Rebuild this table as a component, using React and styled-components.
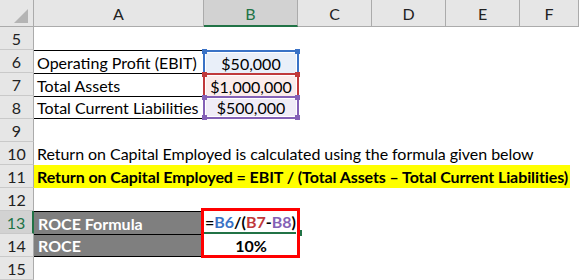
import React from "react";
import styled, { createGlobalStyle, css } from "styled-components";

const GlobalStyle = createGlobalStyle`
  html, body { margin: 0; padding: 0; background: #fff; overflow: hidden; }
  body { font-family: Lato, "Liberation Sans", sans-serif; }
`;

const COLORS = {
  blue: { line: "#3a72c6", fill: "#e9eff9", text: "#3a72c6" },
  red: { line: "#c0393b", fill: "#fbeceb", text: "#c0393b" },
  purple: { line: "#8461b6", fill: "#f0ecf7", text: "#8461b6" },
};

const Sheet = styled.div`
  display: grid;
  grid-template-columns: 34px 170px 94px 74px 74px 74px 59px;
  grid-template-rows: 27px repeat(11, 23px);
  width: 579px;
  height: 280px;
  overflow: hidden;
  font-family: Lato, "Liberation Sans", sans-serif;
  font-size: 16px;
  color: #000;
`;

const Corner = styled.div`
  background: #e6e6e6;
  border-right: 1px solid #ababab;
  border-bottom: 1px solid #ababab;
  display: flex;
  align-items: flex-end;
  justify-content: flex-end;
  padding: 0 4px 3px 0;
  box-sizing: border-box;
`;

const ColHeader = styled.div`
  background: ${(p) => (p.$selected ? "#d2d2d2" : "#e6e6e6")};
  border-right: 1px solid #ababab;
  border-bottom: ${(p) => (p.$selected ? "2px solid #217346" : "1px solid #ababab")};
  color: ${(p) => (p.$selected ? "#217346" : "#222")};
  display: flex;
  align-items: center;
  justify-content: center;
  font-size: 16px;
  box-sizing: border-box;
  padding-top: ${(p) => (p.$selected ? "1px" : "0")};
`;

const RowHeader = styled.div`
  grid-column: 1;
  background: ${(p) => (p.$selected ? "#d2d2d2" : "#e6e6e6")};
  border-right: ${(p) => (p.$selected ? "2px solid #217346" : "1px solid #ababab")};
  border-bottom: 1px solid #c9c9c9;
  color: ${(p) => (p.$selected ? "#217346" : "#222")};
  display: flex;
  align-items: center;
  justify-content: center;
  font-size: 16px;
  box-sizing: border-box;
`;

const Blank = styled.div`
  grid-column: 2 / -1;
`;

const Filler = styled.div`
  grid-column: 4 / -1;
`;

const LabelCell = styled.div`
  border-top: 1px solid #000;
  ${(p) => p.$last && css`border-bottom: 1px solid #000;`}
  display: flex;
  align-items: center;
  padding-left: 3px;
  white-space: nowrap;
  box-sizing: border-box;
`;

const RangeCell = styled.div`
  position: relative;
  border: 2px solid ${(p) => COLORS[p.$tone].line};
  border-bottom: ${(p) => (p.$last ? `2px solid ${COLORS[p.$tone].line}` : "none")};
  margin: 0 0 0 -1px;
  padding: 1px 1px ${(p) => (p.$last ? "1px" : "0")};
  background: ${(p) => COLORS[p.$tone].fill};
  background-clip: content-box;
  display: flex;
  align-items: center;
  justify-content: center;
  white-space: nowrap;
  box-sizing: border-box;
  width: 96px;
`;

const Handle = styled.span`
  position: absolute;
  width: 5px;
  height: 5px;
  background: ${(p) => p.$color};
  ${(p) => (p.$v === "top" ? "top: -3px;" : "bottom: -3px;")}
  ${(p) => (p.$h === "left" ? "left: -3px;" : "right: -3px;")}
`;

const TextCell = styled.div`
  grid-column: 2 / -1;
  display: flex;
  align-items: center;
  padding-left: 3px;
  white-space: nowrap;
  letter-spacing: -0.05px;
`;

const HighlightRow = styled.div`
  grid-column: 2 / -1;
  display: flex;
  align-items: stretch;
`;

const Highlight = styled.div`
  width: 536px;
  background: #ffff00;
  font-weight: 700;
  display: flex;
  align-items: center;
  padding-left: 3px;
  white-space: nowrap;
  box-sizing: border-box;
  letter-spacing: -0.09px;
  overflow: hidden;
`;

const DarkCell = styled.div`
  background: #7f7f7f;
  color: #fff;
  font-weight: 700;
  border-top: 1px solid #000;
  ${(p) => p.$last && css`border-bottom: 1px solid #000;`}
  display: flex;
  align-items: center;
  padding-left: 4px;
  box-sizing: border-box;
`;

const ResultGroup = styled.div`
  grid-column: 3;
  grid-row: span 2;
  position: relative;
  display: grid;
  grid-template-rows: 23px 23px;
  &::after {
    content: "";
    position: absolute;
    top: -3px;
    left: -3px;
    right: -2px;
    bottom: -1px;
    border: 3px solid #ff0000;
    pointer-events: none;
  }
`;

const FormulaCell = styled.div`
  position: relative;
  border-bottom: 2px solid #217346;
  display: flex;
  align-items: center;
  justify-content: center;
  font-weight: 700;
  white-space: nowrap;
  box-sizing: border-box;
  margin-left: -1px;
`;

const FillHandle = styled.span`
  position: absolute;
  right: -4px;
  bottom: -4px;
  width: 5px;
  height: 6px;
  background: #217346;
  border-left: 1px solid #fff;
`;

const ResultCell = styled.div`
  display: flex;
  align-items: center;
  justify-content: center;
  font-weight: 700;
`;

const Ref = styled.span`
  color: ${(p) => COLORS[p.$tone].text};
`;

function Range({ tone, last, children }) {
  const c = COLORS[tone].line;
  return (
    <RangeCell $tone={tone} $last={last}>
      <Handle $color={c} $v="top" $h="left" />
      <Handle $color={c} $v="top" $h="right" />
      {last && <Handle $color={c} $v="bottom" $h="left" />}
      {last && <Handle $color={c} $v="bottom" $h="right" />}
      {children}
    </RangeCell>
  );
}

export default function App() {
  return (
    <>
      <GlobalStyle />
      <Sheet>
        <Corner>
          <svg width="15" height="14" viewBox="0 0 15 14">
            <polygon points="14,0 14,14 0,14" fill="#b4b4b4" />
          </svg>
        </Corner>
        <ColHeader>A</ColHeader>
        <ColHeader $selected>B</ColHeader>
        <ColHeader>C</ColHeader>
        <ColHeader>D</ColHeader>
        <ColHeader>E</ColHeader>
        <ColHeader>F</ColHeader>

        <RowHeader>5</RowHeader>
        <Blank />

        <RowHeader>6</RowHeader>
        <LabelCell>Operating Profit (EBIT)</LabelCell>
        <Range tone="blue">$50,000</Range>
        <Filler />

        <RowHeader>7</RowHeader>
        <LabelCell>Total Assets</LabelCell>
        <Range tone="red">$1,000,000</Range>
        <Filler />

        <RowHeader>8</RowHeader>
        <LabelCell $last>Total Current Liabilities</LabelCell>
        <Range tone="purple" last>$500,000</Range>
        <Filler />

        <RowHeader>9</RowHeader>
        <Blank />

        <RowHeader>10</RowHeader>
        <TextCell>Return on Capital Employed is calculated using the formula given below</TextCell>

        <RowHeader>11</RowHeader>
        <HighlightRow>
          <Highlight>Return on Capital Employed = EBIT / (Total Assets – Total Current Liabilities)</Highlight>
        </HighlightRow>

        <RowHeader>12</RowHeader>
        <Blank />

        <RowHeader $selected>13</RowHeader>
        <DarkCell>ROCE Formula</DarkCell>
        <ResultGroup>
          <FormulaCell>
            =<Ref $tone="blue">B6</Ref>/(<Ref $tone="red">B7</Ref>-<Ref $tone="purple">B8</Ref>)
            <FillHandle />
          </FormulaCell>
          <ResultCell>10%</ResultCell>
        </ResultGroup>
        <Filler />

        <RowHeader>14</RowHeader>
        <DarkCell $last>ROCE</DarkCell>
        <Filler />

        <RowHeader>15</RowHeader>
        <Blank />
      </Sheet>
    </>
  );
}
